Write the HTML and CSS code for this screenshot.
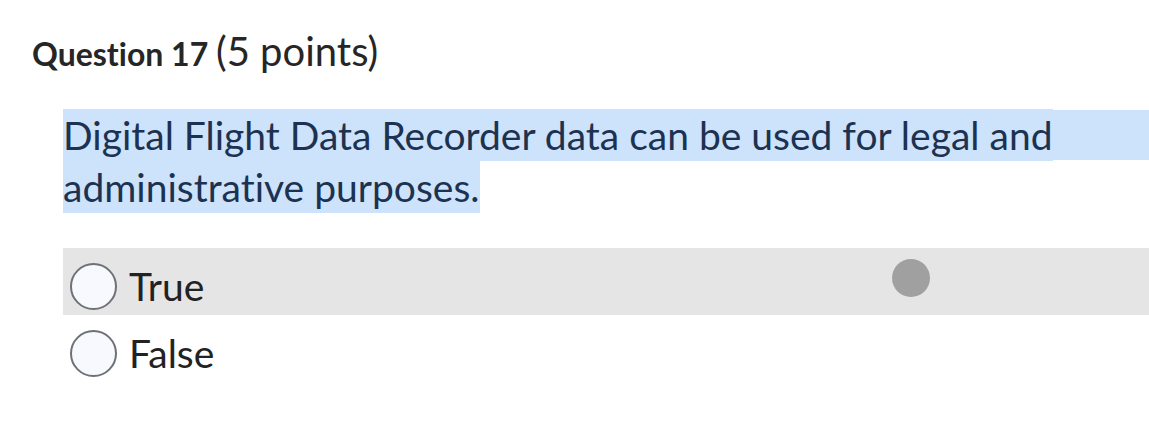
FILE: index.html
```html
<!DOCTYPE html>
<html lang="en">
<head>
  <meta charset="UTF-8" />
  <title>Question 17</title>
  <link rel="stylesheet" href="styles.css">
</head>
<body>
  <div class="question">
    <h2 class="question-title"><strong>Question 17 </strong><span class="points">(5 points)</span></h2>

    <div class="stem">
      <div class="stem-band"></div>
      <div class="stem-text"><span class="mark">Digital Flight Data Recorder data can be used for legal and administrative purposes.</span></div>
    </div>

    <div class="choices">
      <label class="choice hover">
        <span class="radio"></span>
        <span class="choice-text">True</span>
        <span class="cursor-dot"></span>
      </label>
      <label class="choice">
        <span class="radio"></span>
        <span class="choice-text">False</span>
      </label>
    </div>
  </div>
</body>
</html>
```

FILE: styles.css
```css
body {
  margin: 0;
  background: #fff;
  font-family: Lato, 'Noto Sans', sans-serif;
  font-variant-ligatures: none;
  color: #222;
}

.question {
  padding: 29px 0 0 0;
}

.question-title {
  margin: 0 0 0 32px;
  font-size: 40px;
  font-weight: 400;
  line-height: 44px;
  color: #262626;
}

.question-title strong {
  font-weight: 700;
  font-size: 32px;
}

/* selected text: the first line's highlight runs to the page edge */
.stem {
  display: grid;
  margin: 34px 0 0 63px;
}

.stem-band,
.stem-text {
  grid-area: 1 / 1;
}

.stem-band {
  align-self: start;
  height: 50px;
  background: #cde3fb;
}

.stem-text {
  font-size: 39px;
  line-height: 51.5px;
  color: #1c3250;
}

.mark {
  background: #cde3fb;
  padding: 3px 0;
}

.choices {
  margin: 35px 0 0 63px;
}

.choice {
  position: relative;
  display: flex;
  align-items: center;
  gap: 12px;
  height: 67px;
  box-sizing: border-box;
  padding: 9px 0 0 7px;
  font-size: 39px;
  color: #222;
}

.choice.hover {
  background: #e5e5e5;
}

.radio {
  width: 47px;
  height: 47px;
  box-sizing: border-box;
  border: 2px solid #6f7275;
  border-radius: 50%;
  background: #f8f9fe;
  flex: none;
}

.cursor-dot {
  position: absolute;
  left: 829px;
  top: 11px;
  width: 38px;
  height: 38px;
  border-radius: 50%;
  background: #a0a0a0;
}
```
